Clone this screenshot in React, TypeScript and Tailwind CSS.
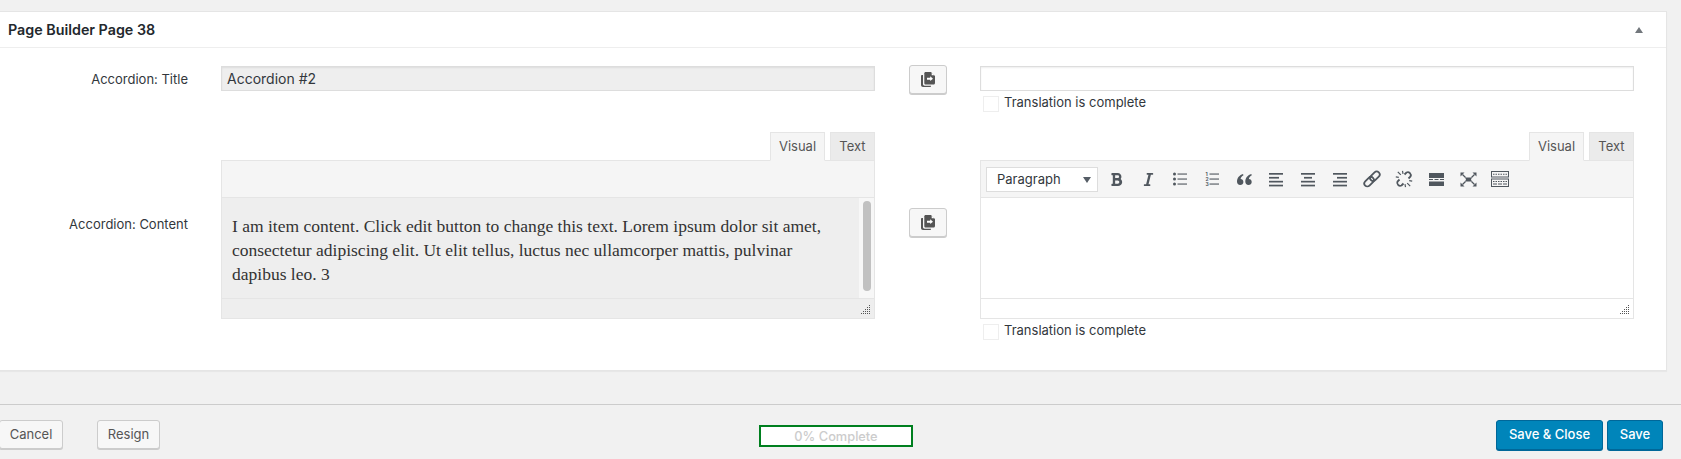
import { FaBold, FaItalic } from 'react-icons/fa'

const iconColor = '#50575e'

function CopyIcon() {
  return (
    <svg width="14" height="15" viewBox="0 0 14 15">
      <path d="M2 3H1C.4 3 0 3.500 0 4V13c0 1.100.9 2 2 2h7c.6 0 1-.4 1-1v-.3H3.700C2.700 13.700 2 13 2 12V3z" fill="#555" />
      <path d="M3.300 1.300C3.300.6 3.900 0 4.600 0H10l4 4v7c0 .9-.6 1.500-1.400 1.500H4.600c-.7 0-1.300-.6-1.300-1.300V1.300z" fill="#555" />
      <path d="M10.700 0.500V3.300H13.500z" fill="#fff" />
      <path d="M6 5.700h3.200V4.300l2.800 2.400-2.800 2.400V7.700H6z" fill="#fff" />
    </svg>
  )
}

function ResizeHandle() {
  const dots = [
    [8, 0], [8, 2], [6, 2], [8, 4], [6, 4], [4, 4], [8, 6], [6, 6], [4, 6], [2, 6],
    [8, 8], [6, 8], [4, 8], [2, 8], [0, 8],
  ]
  return (
    <svg width="10" height="10" viewBox="0 0 10 10">
      {dots.map(([x, y]) => (
        <rect key={`${x}-${y}`} x={x} y={y} width="1" height="1" fill="#555" />
      ))}
    </svg>
  )
}

function Lines({ rows }: { rows: number[][] }) {
  return (
    <svg width="15" height="15" viewBox="0 0 15 15">
      {rows.map(([x, w], i) => (
        <rect key={i} x={x} y={1 + i * 3.9} width={w} height="1.700" fill={iconColor} />
      ))}
    </svg>
  )
}

function BulletList() {
  return (
    <svg width="14" height="14" viewBox="0 0 14 14">
      {[2, 7, 12].map((y) => (
        <g key={y}>
          <circle cx="1.500" cy={y} r="1.500" fill={iconColor} />
          <rect x="4.500" y={y - 0.5} width="9.500" height="1.100" fill={iconColor} />
        </g>
      ))}
    </svg>
  )
}

function NumberList() {
  return (
    <svg width="14" height="14" viewBox="0 0 14 14">
      {[2, 7, 12].map((y, i) => (
        <g key={y}>
          <text x="0.500" y={y + 2} fontSize="5" fontWeight="700" fill={iconColor} fontFamily="Inter, sans-serif">{i + 1}</text>
          <rect x="4.500" y={y - 0.5} width="9.500" height="1.100" fill={iconColor} />
        </g>
      ))}
    </svg>
  )
}

function QuoteIcon() {
  const comma = 'M6 0C2.500 1 0 4 0 7.500C0 9.600 1.300 11 3.200 11C5 11 6.400 9.700 6.400 7.900C6.400 6.200 5.200 5 3.600 5C3.700 3.500 4.800 2 6.500 1.200z'
  return (
    <svg width="15" height="11" viewBox="0 0 15 11" fill={iconColor}>
      <path d={comma} />
      <path d={comma} transform="translate(8.300 0)" />
    </svg>
  )
}

function LinkIcon({ broken }: { broken?: boolean }) {
  return (
    <svg width="18" height="18" viewBox="0 0 18 18" fill="none" stroke={iconColor} strokeWidth="1.800">
      {broken ? (
        <>
          <path d="M9.500 4.500L11.500 2.500A3 3 0 0 1 15.500 6.500L13.500 8.500" />
          <path d="M4.500 9.500L2.500 11.500A3 3 0 0 0 6.500 15.500L8.500 13.500" />
          <path d="M7.500 .8L8 3.800M2.800 1.800L5.800 4.800M.8 6.800L3.800 7.300M10.500 17.200L10 14.200M15.200 16.200L12.200 13.200M17.200 11.200L14.200 10.700" strokeWidth="1.200" />
        </>
      ) : (
        <>
          <rect x="0.600" y="8.700" width="11" height="6" rx="3" transform="rotate(-45 6.100 11.700)" />
          <rect x="6.400" y="3.300" width="11" height="6" rx="3" transform="rotate(-45 11.900 6.300)" />
        </>
      )}
    </svg>
  )
}

function MoreIcon() {
  return (
    <svg width="15" height="15" viewBox="0 0 15 15">
      <rect x="0" y="1" width="15" height="5" fill={iconColor} />
      <rect x="0" y="7" width="4" height="1" fill={iconColor} />
      <rect x="5.500" y="7" width="4" height="1" fill={iconColor} />
      <rect x="11" y="7" width="4" height="1" fill={iconColor} />
      <rect x="0" y="9.500" width="15" height="4.500" fill={iconColor} />
    </svg>
  )
}

function FullscreenIcon() {
  return (
    <svg width="17" height="15" viewBox="0 0 17 15" fill={iconColor}>
      <path d="M5.500 5.500L2.500 2.500" stroke={iconColor} strokeWidth="1.300" />
      <path d="M11.500 5.500L14.500 2.500" stroke={iconColor} strokeWidth="1.300" />
      <path d="M5.500 9.500L2.500 12.500" stroke={iconColor} strokeWidth="1.300" />
      <path d="M11.500 9.500L14.500 12.500" stroke={iconColor} strokeWidth="1.300" />
      <path d="M0.500 0.500H4.500L0.500 4.500z" />
      <path d="M16.500 0.500H12.500L16.500 4.500z" />
      <path d="M0.500 14.500H4.500L0.500 10.500z" />
      <path d="M16.500 14.500H12.500L16.500 10.500z" />
      <path d="M5 5.500H12L11 7.500L12 9.500H5L6 7.500z" />
    </svg>
  )
}

function KitchenSink() {
  return (
    <svg width="18" height="16" viewBox="0 0 18 16" fill="none" stroke={iconColor}>
      <rect x="0.500" y="0.500" width="17" height="5.500" />
      <rect x="0.500" y="8" width="17" height="7.500" />
      <path d="M2 3.250H16" strokeDasharray="1.500 1" />
      <path d="M2 10.500H16" strokeDasharray="1.500 1" />
      <path d="M2 13H16" strokeDasharray="4 1" />
    </svg>
  )
}

function ToolBtn({ children }: { children: React.ReactNode }) {
  return <div className="flex h-[25px] w-8 items-center justify-center">{children}</div>
}

function Tabs() {
  return (
    <div className="-mb-px flex justify-end">
      <div className="relative z-10 flex h-[29px] w-[55px] items-center justify-center border border-[#e5e5e5] border-b-[#f5f5f5] bg-[#f5f5f5] text-[13px] text-[#555]">
        Visual
      </div>
      <div className="ml-[5px] flex h-[29px] w-[45px] items-center justify-center border border-[#e5e5e5] bg-[#ebebeb] text-[13px] text-[#555]">
        Text
      </div>
    </div>
  )
}

function TranslationComplete() {
  return (
    <div className="mt-[5px] ml-[3px] flex items-center text-[13px] leading-[15px] text-[#32373c]">
      <div className="h-[16px] w-[16px] border border-[#eee] bg-white" />
      <span className="ml-[5px] -translate-y-[2px]">Translation is complete</span>
    </div>
  )
}

function CopyButton({ className }: { className: string }) {
  return (
    <div className={`flex h-[29px] w-[38px] items-center justify-center rounded-[3px] border border-[#ccc] bg-[#f7f7f7] shadow-[0_1px_0_#ccc] ${className}`}>
      <CopyIcon />
    </div>
  )
}

export default function App() {
  return (
    <div className="h-[459px] overflow-hidden bg-[#f1f1f1] pt-[11px] font-['Inter',sans-serif] text-[#32373c]">
      <div className="h-[360px] w-[1667px] border border-l-0 border-[#e5e5e5] bg-white shadow-[0_1px_1px_rgba(0,0,0,0.04)]">
        <div className="flex h-[36px] items-center justify-between border-b border-[#eee] pl-2 pr-[23px]">
          <h2 className="text-[14.300px] font-semibold text-[#23282d]">Page Builder Page 38</h2>
          <div className="h-0 w-0 border-x-[4px] border-b-[6px] border-x-transparent border-b-[#72777c]" />
        </div>

        <div className="flex pt-[18px]">
          <div className="w-[188px] shrink-0 text-right text-[13px] text-[#32373c]">
            <div className="mt-[4px]">Accordion: Title</div>
            <div className="mt-[125px]">Accordion: Content</div>
          </div>

          <div className="ml-[33px] w-[654px] shrink-0">
            <div className="flex h-[25px] items-center border border-[#ddd] bg-[#eee] px-[5px] text-[14px] text-[#32373c] shadow-[inset_0_1px_2px_rgba(0,0,0,0.07)]">
              Accordion #2
            </div>
            <div className="mt-[41px]">
              <Tabs />
              <div className="border border-[#e5e5e5] bg-[#eee]">
                <div className="h-[37px] border-b border-[#e5e5e5] bg-[#f5f5f5]" />
                <div className="flex h-[101px] border-b border-[#e5e5e5]">
                  <div className="flex-1 pt-[16px] pl-[10px] pr-[4px] font-['Liberation_Serif',serif] text-[17.500px] leading-[24px] text-[#333]">
                    I am item content. Click edit button to change this text. Lorem ipsum dolor sit amet, consectetur adipiscing elit. Ut elit tellus, luctus nec ullamcorper mattis, pulvinar
                    <br />
                    dapibus leo. 3
                  </div>
                  <div className="flex w-[15px] justify-center bg-[#f7f7f7] pt-[3px]">
                    <div className="h-[90px] w-[8px] rounded-[4px] bg-[#c1c1c1]" />
                  </div>
                </div>
                <div className="flex h-[19px] items-end justify-end pr-[3px] pb-[3px]">
                  <ResizeHandle />
                </div>
              </div>
            </div>
          </div>

          <div className="ml-[34px] w-[38px] shrink-0">
            <CopyButton className="-mt-[1px]" />
            <CopyButton className="mt-[114px]" />
          </div>

          <div className="ml-[33px] w-[654px] shrink-0">
            <div className="h-[25px] border border-[#ddd] bg-white shadow-[inset_0_1px_2px_rgba(0,0,0,0.07)]" />
            <TranslationComplete />
            <div className="mt-[20px]">
              <Tabs />
              <div className="border border-[#e5e5e5] bg-white">
                <div className="flex h-[37px] items-center border-b border-[#e5e5e5] bg-[#f5f5f5] pl-[5px]">
                  <div className="flex h-[25px] w-[112px] items-center justify-between border border-[#ddd] bg-white pt-px pl-[10px] pr-[6px] text-[13px] text-[#32373c]">
                    Paragraph
                    <div className="h-0 w-0 border-x-[4px] border-t-[6px] border-x-transparent border-t-[#555d66]" />
                  </div>
                  <div className="ml-[2px] flex text-[#50575e]">
                    <ToolBtn><FaBold size={15} /></ToolBtn>
                    <ToolBtn><FaItalic size={15} /></ToolBtn>
                    <ToolBtn><BulletList /></ToolBtn>
                    <ToolBtn><NumberList /></ToolBtn>
                    <ToolBtn><QuoteIcon /></ToolBtn>
                    <ToolBtn><Lines rows={[[0, 14], [0, 10], [0, 14], [0, 14]]} /></ToolBtn>
                    <ToolBtn><Lines rows={[[0, 14], [3, 8], [0, 14], [0, 14]]} /></ToolBtn>
                    <ToolBtn><Lines rows={[[0, 14], [4, 10], [0, 14], [0, 14]]} /></ToolBtn>
                    <ToolBtn><LinkIcon /></ToolBtn>
                    <ToolBtn><LinkIcon broken /></ToolBtn>
                    <ToolBtn><MoreIcon /></ToolBtn>
                    <ToolBtn><FullscreenIcon /></ToolBtn>
                    <ToolBtn><KitchenSink /></ToolBtn>
                  </div>
                </div>
                <div className="h-[101px] border-b border-[#e5e5e5]" />
                <div className="flex h-[19px] items-end justify-end pr-[3px] pb-[3px]">
                  <ResizeHandle />
                </div>
              </div>
            </div>
            <TranslationComplete />
          </div>
        </div>
      </div>

      <div className="relative mt-[33px] flex h-[55px] items-start border-t border-[#ccc] pt-[15px]">
        <div className="-ml-[1px] flex h-[29px] w-[64px] items-center justify-center rounded-[3px] border border-[#ccc] bg-[#f7f7f7] text-[13px] text-[#555] shadow-[0_1px_0_#ccc]">
          Cancel
        </div>
        <div className="ml-[34px] flex h-[29px] w-[63px] items-center justify-center rounded-[3px] border border-[#ccc] bg-[#f7f7f7] text-[13px] text-[#555] shadow-[0_1px_0_#ccc]">
          Resign
        </div>
        <div className="ml-[599px] mt-[5px] flex h-[22px] w-[154px] items-center justify-center border-2 border-[#007f1f] bg-white pt-px text-[12.800px] font-medium text-[#ccc]">
          0% Complete
        </div>
        <div className="ml-[583px] flex h-[30px] w-[107px] items-center justify-center rounded-[3px] border border-[#006799] bg-[#0085ba] text-[13px] font-medium text-white shadow-[0_1px_0_#006799]">
          Save &amp; Close
        </div>
        <div className="ml-[4px] flex h-[30px] w-[56px] items-center justify-center rounded-[3px] border border-[#006799] bg-[#0085ba] text-[13px] font-medium text-white shadow-[0_1px_0_#006799]">
          Save
        </div>
      </div>
    </div>
  )
}
